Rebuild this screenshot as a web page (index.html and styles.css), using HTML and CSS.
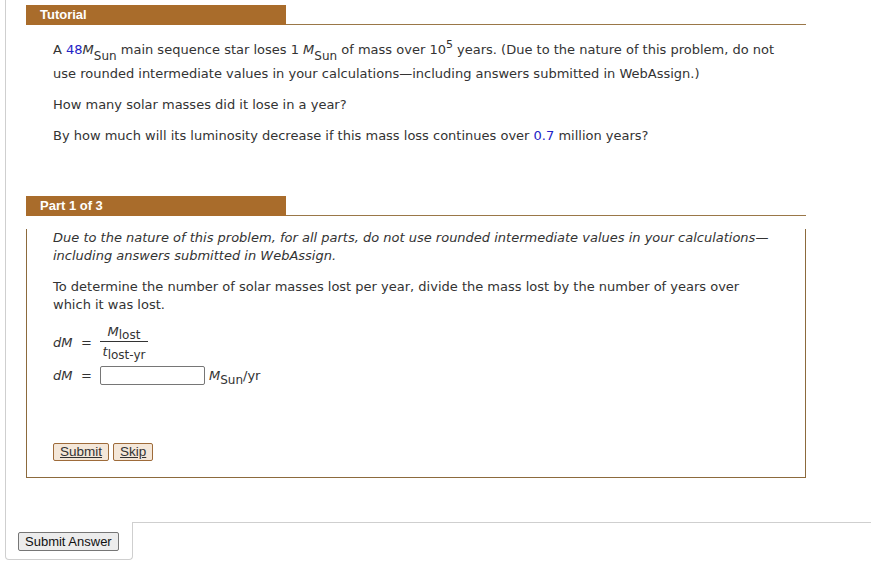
FILE: index.html
```html
<!DOCTYPE html>
<html>
<head>
<meta charset="utf-8">
<title>Tutorial</title>
<link rel="stylesheet" href="styles.css">
</head>
<body>
<div class="page">
  <div class="main">
    <section class="tutorial">
      <div class="head"><div class="tab">Tutorial</div><div class="rule"></div></div>
      <div class="tut-body">
        <p class="first">A <span class="blue">48</span><i>M</i><sub>Sun</sub> main sequence star loses 1 <i>M</i><sub>Sun</sub> of mass over 10<sup>5</sup> years. (Due to the nature of this problem, do not use rounded intermediate values in your calculations—including answers submitted in WebAssign.)</p>
        <p class="second">How many solar masses did it lose in a year?</p>
        <p>By how much will its luminosity decrease if this mass loss continues over <span class="blue">0.7</span> million years?</p>
      </div>
    </section>
    <section class="part">
      <div class="head"><div class="tab">Part 1 of 3</div><div class="rule"></div></div>
      <div class="part-body">
        <p class="note">Due to the nature of this problem, for all parts, do not use rounded intermediate values in your calculations—including answers submitted in WebAssign.</p>
        <p class="lead">To determine the number of solar masses lost per year, divide the mass lost by the number of years over which it was lost.</p>
        <div class="eq eq1">
          <span class="lhs"><i>dM</i></span><span class="eqs">=</span>
          <span class="frac">
            <span class="num"><i>M</i><sub>lost</sub></span>
            <span class="den"><i>t</i><sub>lost-yr</sub></span>
          </span>
        </div>
        <div class="eq eq2">
          <span class="lhs"><i>dM</i></span><span class="eqs">=</span>
          <input class="answer" type="text">
          <span class="unit"><i>M</i><sub>Sun</sub>/yr</span>
        </div>
        <div class="actions">
          <button class="btn">Submit</button>
          <button class="btn">Skip</button>
        </div>
      </div>
    </section>
  </div>
  <div class="footer">
    <div class="foot-tab"><button class="submit-answer">Submit Answer</button></div>
    <div class="foot-fill"></div>
  </div>
</div>
</body>
</html>
```

FILE: styles.css
```css
body {
  margin: 0;
  font-family: "DejaVu Sans", Verdana, sans-serif;
  font-size: 13px;
  color: #333;
  background: #fff;
}
.page {
  margin-left: 5px;
}
.main {
  border-left: 1px solid #cfcfcf;
  padding: 5px 0 44px 20px;
}
.head {
  display: flex;
  width: 780px;
  height: 20px;
}
.tab {
  width: 260px;
  background: #a96c2b;
  color: #fff;
  font-family: "Liberation Sans", Arial, sans-serif;
  font-weight: bold;
  font-size: 13px;
  line-height: 19px;
  padding-left: 14px;
  box-sizing: border-box;
}
.rule {
  flex: 1;
  border-bottom: 1px solid #9a7748;
}
p {
  margin: 13px 0;
  line-height: 18px;
}
.blue {
  color: #2323c6;
}
sub {
  font-size: 12px;
  vertical-align: -6px;
  line-height: 0;
}
sup {
  font-size: 11px;
  vertical-align: 6px;
  line-height: 0;
}
.tut-body {
  padding: 0 0 38px 27px;
  width: 735px;
}
.tut-body p.first {
  margin-top: 13px;
  margin-bottom: 10px;
  line-height: 24px;
}
.tut-body p.second {
  margin-top: 10px;
}
.part-body {
  width: 780px;
  box-sizing: border-box;
  border: 1px solid #8c6a3d;
  border-top: none;
  padding: 0 26px 16px 26px;
}
.note {
  font-style: italic;
}
.part-body p.lead {
  margin-bottom: 10px;
}
.eq {
  display: flex;
  align-items: center;
}
.lhs {
  width: 28px;
}
.eqs {
  width: 19px;
}
.frac {
  display: inline-flex;
  flex-direction: column;
  align-items: center;
  width: 48px;
}
.num {
  border-bottom: 1px solid #333;
  align-self: stretch;
  text-align: center;
  line-height: 16px;
  padding-bottom: 1px;
}
.num sub, .den sub {
  vertical-align: -3px;
}
.den {
  line-height: 16px;
  padding-top: 2px;
}
.eq1 {
  margin-top: 0;
}
.eq2 {
  margin-top: 6px;
}
.answer {
  width: 105px;
  height: 19px;
  box-sizing: border-box;
  border: 1px solid #767676;
  border-radius: 2px;
  margin: 0 4px 0 0;
  padding: 0;
}
.unit sub {
  vertical-align: -4px;
}
.actions {
  display: flex;
  gap: 4px;
  margin-top: 58px;
}
.btn {
  height: 18px;
  padding: 0 6px;
  font-family: "Liberation Sans", Arial, sans-serif;
  font-size: 13.5px;
  line-height: 16px;
  color: #333;
  text-decoration: underline;
  background: #f4e7d9;
  border: 1px solid #9e6b3a;
  border-radius: 2px;
}
.footer {
  display: flex;
}
.foot-tab {
  width: 128px;
  box-sizing: border-box;
  border: 1px solid #cfcfcf;
  border-top: none;
  border-radius: 0 0 4px 4px;
  padding: 10px 0 8px 12px;
}
.submit-answer {
  display: block;
  height: 19px;
  padding: 0 6px;
  font-family: "Liberation Sans", Arial, sans-serif;
  font-size: 13px;
  line-height: 16px;
  color: #111;
  background: #ececec;
  border: 1px solid #767676;
  border-radius: 2px;
}
.foot-fill {
  flex: 1;
  border-top: 1px solid #cfcfcf;
}
```
